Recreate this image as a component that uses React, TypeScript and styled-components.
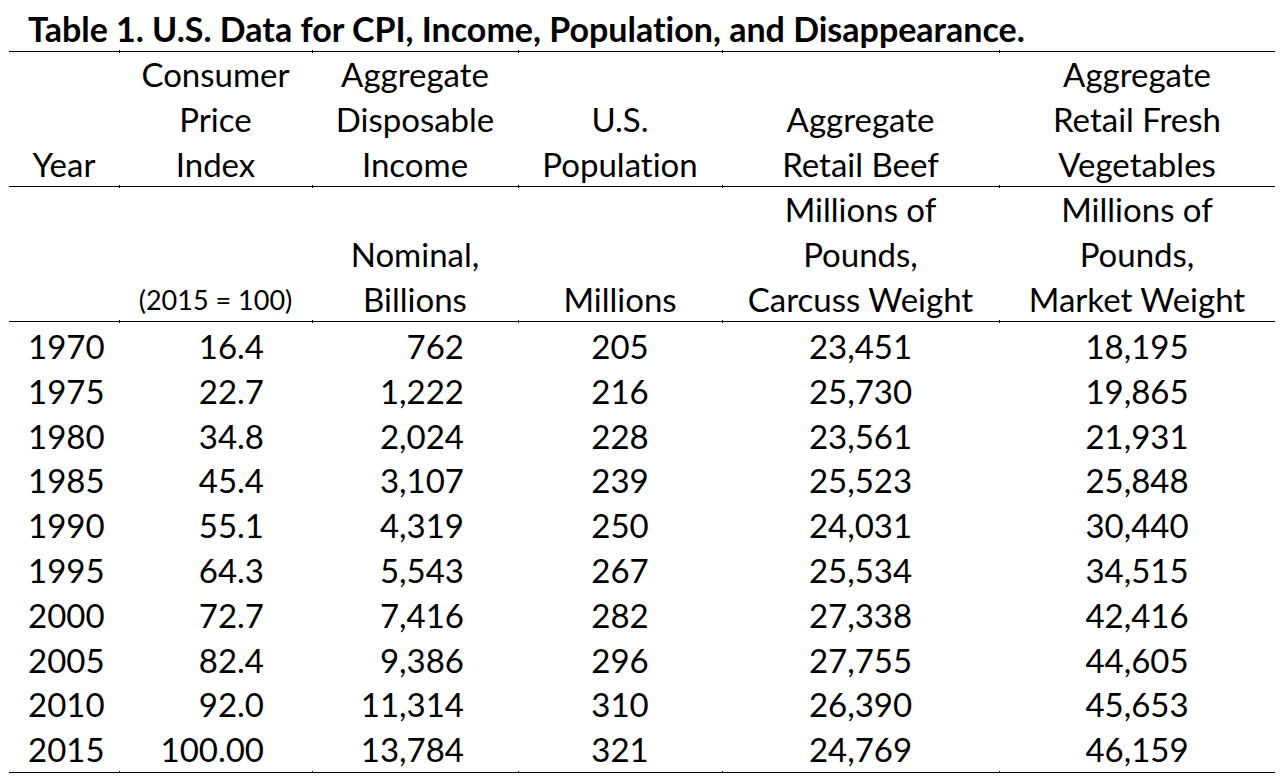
import React from 'react';
import styled, { createGlobalStyle } from 'styled-components';

const Columns = '110px 193px 206px 204px 277px 276px';

const GlobalStyle = createGlobalStyle`
  html, body {
    margin: 0;
    padding: 0;
    background: #ffffff;
  }
  body {
    font-family: Lato, "Open Sans", sans-serif;
    font-variant-ligatures: none;
    color: #000000;
  }
`;

const headers = [
  { top: ['Year'], sub: [] as string[] },
  { top: ['Consumer', 'Price', 'Index'], sub: ['(2015 = 100)'], small: true },
  { top: ['Aggregate', 'Disposable', 'Income'], sub: ['Nominal,', 'Billions'] },
  { top: ['U.S.', 'Population'], sub: ['Millions'] },
  { top: ['Aggregate', 'Retail Beef'], sub: ['Millions of', 'Pounds,', 'Carcuss Weight'] },
  {
    top: ['Aggregate', 'Retail Fresh', 'Vegetables'],
    sub: ['Millions of', 'Pounds,', 'Market Weight'],
  },
];

const rows = [
  ['1970', '16.4', '762', '205', '23,451', '18,195'],
  ['1975', '22.7', '1,222', '216', '25,730', '19,865'],
  ['1980', '34.8', '2,024', '228', '23,561', '21,931'],
  ['1985', '45.4', '3,107', '239', '25,523', '25,848'],
  ['1990', '55.1', '4,319', '250', '24,031', '30,440'],
  ['1995', '64.3', '5,543', '267', '25,534', '34,515'],
  ['2000', '72.7', '7,416', '282', '27,338', '42,416'],
  ['2005', '82.4', '9,386', '296', '27,755', '44,605'],
  ['2010', '92.0', '11,314', '310', '26,390', '45,653'],
  ['2015', '100.00', '13,784', '321', '24,769', '46,159'],
];

type Align = 'left' | 'right' | 'center';

const dataAlign: { align: Align; pad: number }[] = [
  { align: 'left', pad: 19 },
  { align: 'right', pad: 48 },
  { align: 'right', pad: 54 },
  { align: 'center', pad: 0 },
  { align: 'center', pad: 0 },
  { align: 'center', pad: 0 },
];

const Rule = () => (
  <RuleLine>
    {headers.map((_, i) => (
      <Tick key={i} $show={i > 0} />
    ))}
  </RuleLine>
);

export default function App() {
  return (
    <>
      <GlobalStyle />
      <Page>
        <Title>Table 1. U.S. Data for CPI, Income, Population, and Disappearance.</Title>
        <Rule />
        <Row>
          {headers.map((h, i) => (
            <HeadCell key={i}>
              {h.top.map((t) => (
                <Line key={t}>{t}</Line>
              ))}
            </HeadCell>
          ))}
        </Row>
        <Rule />
        <Row>
          {headers.map((h, i) => (
            <HeadCell key={i}>
              {h.sub.map((t) => (
                <Line key={t} $small={h.small}>
                  {t}
                </Line>
              ))}
            </HeadCell>
          ))}
        </Row>
        <Rule />
        <Body>
          {rows.map((r) => (
            <DataRow key={r[0]}>
              {r.map((v, i) => (
                <DataCell key={i} $align={dataAlign[i].align} $pad={dataAlign[i].pad}>
                  {v}
                </DataCell>
              ))}
            </DataRow>
          ))}
        </Body>
        <Rule />
      </Page>
    </>
  );
}

const Page = styled.div`
  width: 1266px;
  padding: 6px 0 0 9px;
`;

const Title = styled.div`
  font-weight: 700;
  font-size: 34px;
  line-height: 45px;
  height: 45px;
  padding-left: 19px;
  white-space: nowrap;
`;

const RuleLine = styled.div`
  display: grid;
  grid-template-columns: ${Columns};
  height: 1px;
  background: #000000;
`;

const Tick = styled.div<{ $show: boolean }>`
  height: 3px;
  margin-top: -1px;
  width: 1px;
  background: ${(p) => (p.$show ? '#000000' : 'transparent')};
`;

const Row = styled.div`
  display: grid;
  grid-template-columns: ${Columns};
  height: 134px;
`;

const HeadCell = styled.div`
  display: flex;
  flex-direction: column;
  justify-content: flex-end;
  align-items: center;
  text-align: center;
`;

const Line = styled.div<{ $small?: boolean }>`
  font-size: ${(p) => (p.$small ? '27px' : '33px')};
  line-height: 45px;
  height: 45px;
  white-space: nowrap;
`;

const Body = styled.div`
  display: flex;
  flex-direction: column;
  padding-top: 2px;
`;

const DataRow = styled.div`
  display: grid;
  grid-template-columns: ${Columns};
  height: 44.8px;
`;

const DataCell = styled.div<{ $align: Align; $pad: number }>`
  font-size: 33px;
  line-height: 44.8px;
  white-space: nowrap;
  text-align: ${(p) => p.$align};
  padding-left: ${(p) => (p.$align === 'left' ? p.$pad : 0)}px;
  padding-right: ${(p) => (p.$align === 'right' ? p.$pad : 0)}px;
`;
